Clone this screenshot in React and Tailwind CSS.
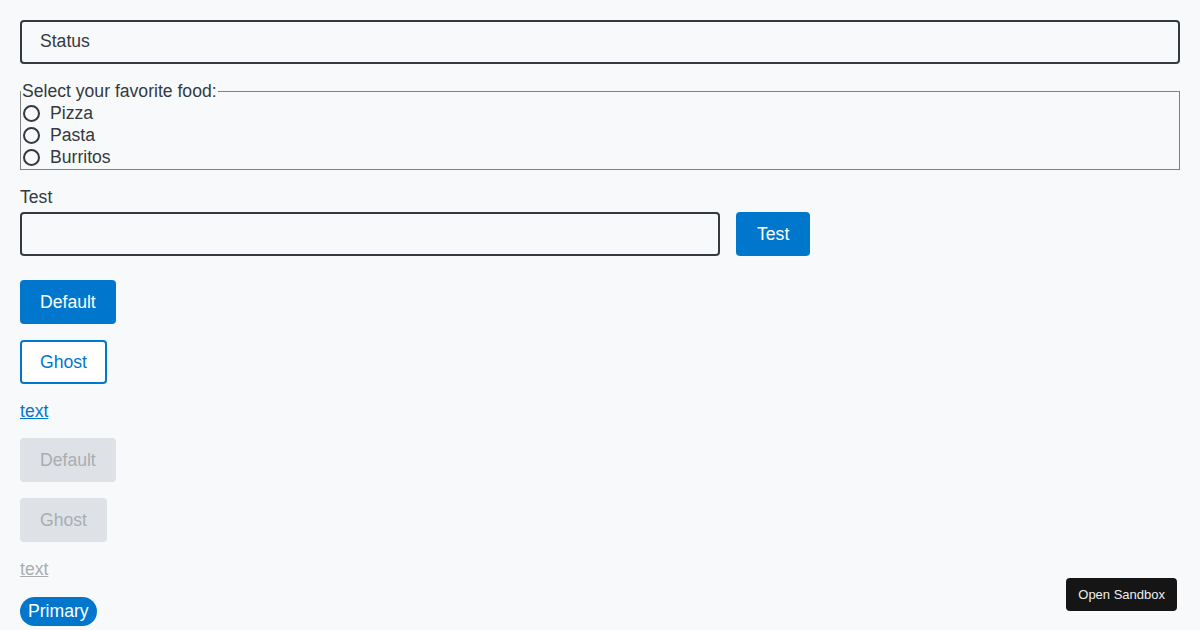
import React from "react";

function Radio({ label }) {
  return (
    <label className="flex items-center h-[22px]">
      <span className="ml-[2px] mr-[10px] w-[17px] h-[17px] rounded-full border-2 border-[#343a40] bg-[#f8f9fa]" />
      <span>{label}</span>
    </label>
  );
}

function App() {
  return (
    <div
      className="min-h-[630px] bg-[#f8f9fa] p-5 text-[17.6px] leading-[1.2] text-[#343a40]"
      style={{ fontFamily: '"Liberation Sans", Arial, sans-serif' }}
    >
      <div className="h-11 flex items-center px-[18px] border-2 border-[#343a40] rounded-[4px]">
        Status
      </div>

      <fieldset className="mt-[17px] border border-[#808080] pb-[1px]">
        <legend className="px-[1px]">Select your favorite food:</legend>
        <Radio label="Pizza" />
        <Radio label="Pasta" />
        <Radio label="Burritos" />
      </fieldset>

      <div className="mt-[17px]">
        <div className="mb-[4px]">Test</div>
        <div className="flex gap-4">
          <input
            type="text"
            className="w-[700px] h-11 border-2 border-[#343a40] rounded-[4px] bg-transparent px-4"
          />
          <button className="h-11 px-[21px] bg-[#0077cc] text-white rounded-[4px]">
            Test
          </button>
        </div>
      </div>

      <div className="mt-6 flex flex-col items-start gap-4">
        <button className="h-11 px-5 bg-[#0077cc] text-white rounded-[4px]">
          Default
        </button>
        <button className="h-11 px-[18px] bg-white text-[#0077cc] border-2 border-[#0077cc] rounded-[4px]">
          Ghost
        </button>
        <a href="#" className="text-[#0077cc] underline leading-[22px]">
          text
        </a>
        <button disabled className="h-11 px-5 bg-[#dee2e6] text-[#a8adb2] rounded-[4px]">
          Default
        </button>
        <button disabled className="h-11 px-[18px] bg-[#dee2e6] text-[#a8adb2] border-2 border-[#dee2e6] rounded-[4px]">
          Ghost
        </button>
        <a className="text-[#a8adb2] underline leading-[22px]">text</a>
        <span className="mt-[1px] px-2 py-1 bg-[#0077cc] text-white rounded-full">
          Primary
        </span>
      </div>

      <button className="fixed right-[23px] bottom-[19px] h-[33px] px-3 bg-[#151515] text-[#eeeeee] text-[13px] rounded-[4px]">
        Open Sandbox
      </button>
    </div>
  );
}

export default App;
